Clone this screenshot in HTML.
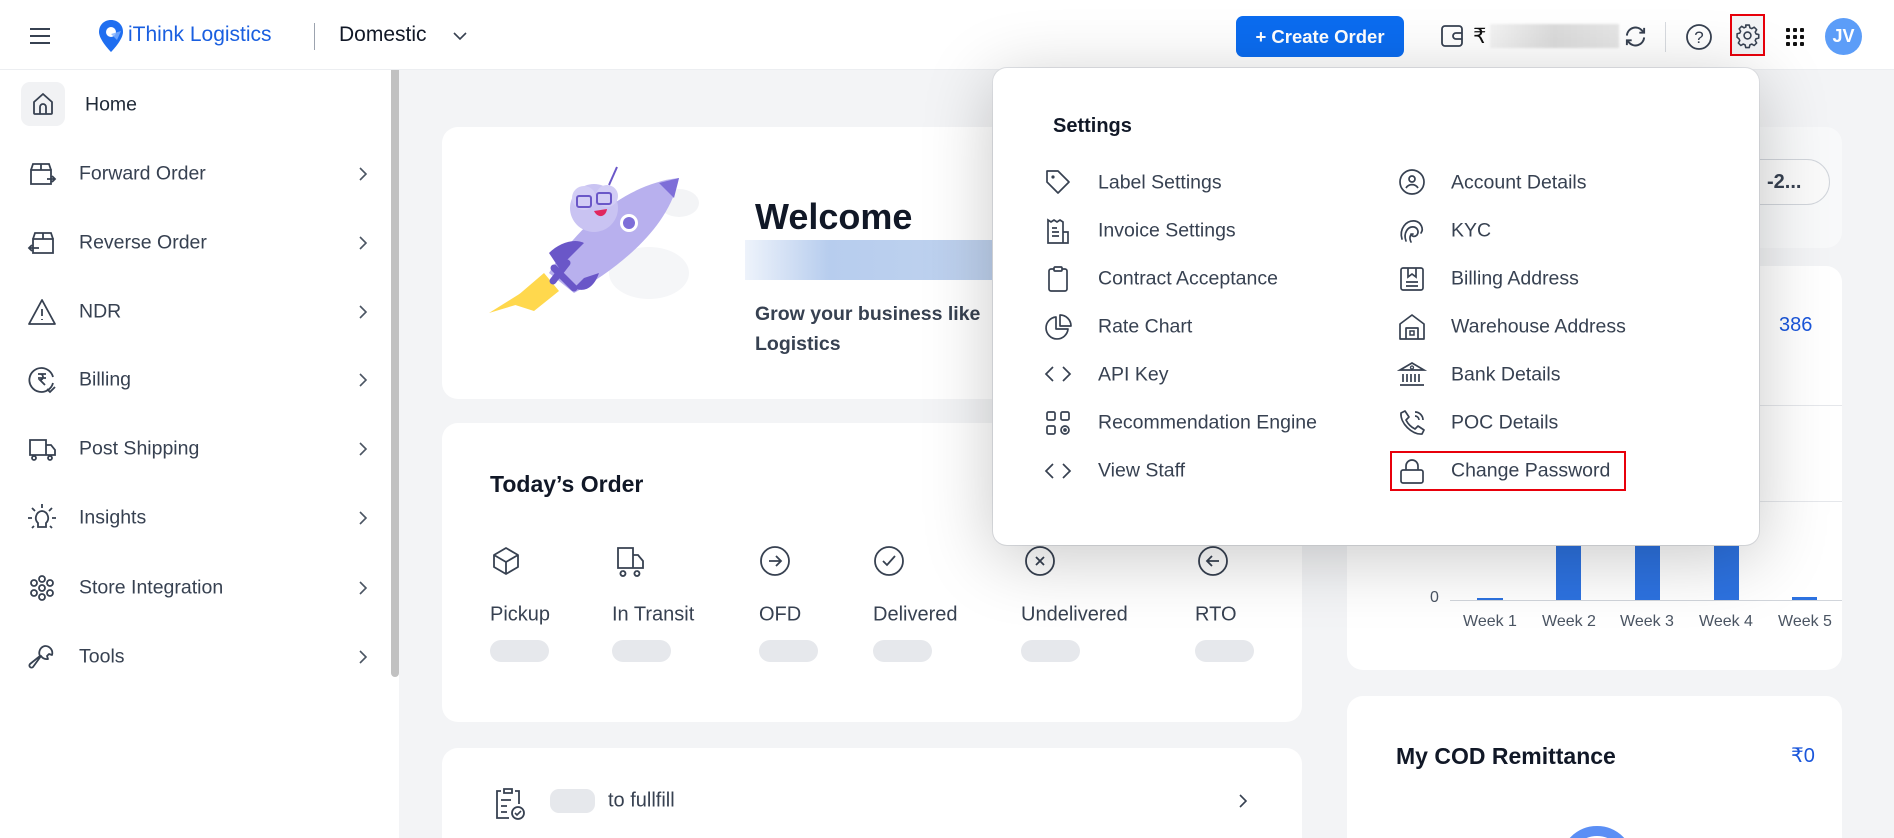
<!DOCTYPE html>
<html style="width:1894px;height:838px;overflow:hidden"><head><meta charset="utf-8"><style>
*{box-sizing:border-box;margin:0;padding:0}
html,body{width:1894px;height:838px;overflow:hidden}
body{background:#f3f4f6;font-family:"Liberation Sans",sans-serif;color:#374151;position:relative}
.abs{position:absolute}
.hdr{left:0;top:0;width:1894px;height:70px;background:#fff;border-bottom:1px solid #eceef1}
.side{left:0;top:70px;width:399px;height:768px;background:#fff}
.sb{left:391px;top:70px;width:8px;height:607px;background:#c1c1c1;border-radius:0 0 4px 4px}
.nav{position:absolute;left:79px;font-size:19.5px;color:#374151;transform:translateY(-50%)}
.ni{position:absolute;left:27px;width:30px;height:30px;transform:translateY(-50%)}
.chev{position:absolute;left:356px;width:14px;height:14px;transform:translateY(-50%)}
.card{background:#fff;border-radius:16px}
.lbl{position:absolute;font-size:20px;color:#374151;transform:translateY(-50%)}
.pill{position:absolute;width:59px;height:22px;border-radius:11px;background:#e6e8ec}
.oi{position:absolute;width:32px;height:32px;transform:translate(0,-50%)}
.pop{left:993px;top:68px;width:766px;height:477px;background:#fff;border-radius:14px;box-shadow:0 12px 70px rgba(0,0,0,.22),0 0 0 1px #e5e7eb}
.it{position:absolute;font-size:19.5px;color:#374151;transform:translateY(-50%)}
.ic{position:absolute;width:28px;height:28px;transform:translateY(-50%)}
svg{overflow:visible}
</style></head><body>

<!-- header -->
<div class="abs hdr"></div>
<svg class="abs" style="left:30px;top:28px" width="20" height="16"><path d="M0 1h20M0 8h20M0 15h20" stroke="#374151" stroke-width="2"/></svg>
<svg class="abs" style="left:99px;top:20px" width="24" height="32" viewBox="0 0 24 32"><path d="M12 0C5 0 0 5 0 12c0 8 12 20 12 20s12-12 12-20C24 5 19 0 12 0z" fill="#1f6ef0"/><circle cx="12" cy="12" r="5" fill="#fff"/><path d="M12 14l6 6 4-9z" fill="#7fb0ff" opacity=".8"/></svg>
<div class="abs" style="left:128px;top:23px;font-size:21px;color:#1a5fe0">iThink Logistics</div>
<div class="abs" style="left:314px;top:23px;width:1px;height:27px;background:#9ca3af"></div>
<div class="abs" style="left:339px;top:23px;font-size:21px;color:#111827">Domestic</div>
<svg class="abs" style="left:453px;top:32px" width="14" height="8"><path d="M1 1l6 6 6-6" fill="none" stroke="#374151" stroke-width="1.6"/></svg>

<div class="abs" style="left:1236px;top:16px;width:168px;height:41px;background:#0b6cf0;border-radius:7px;color:#fff;font-size:18.5px;font-weight:bold;line-height:41px;text-align:center">+ Create Order</div>
<svg class="abs" style="left:1441px;top:25px" width="22" height="22"><rect x="1" y="1" width="20" height="20" rx="3" fill="none" stroke="#374151" stroke-width="1.8"/><path d="M21 8h-6a3 3 0 000 6h6" fill="none" stroke="#374151" stroke-width="1.8"/></svg>
<div class="abs" style="left:1473px;top:24px;font-size:21px;color:#111">₹</div>
<div class="abs" style="left:1490px;top:24px;width:129px;height:24px;background:linear-gradient(90deg,#f3f3f3,#dcdcdc 50%,#e6e6e6);filter:blur(1px)"></div>
<svg class="abs" style="left:1624px;top:25px" width="23" height="23" viewBox="0 0 24 24"><path d="M3 11a9 9 0 0116-5l2 2M21 13a9 9 0 01-16 5l-2-2M21 3v5h-5M3 21v-5h5" fill="none" stroke="#374151" stroke-width="2"/></svg>
<div class="abs" style="left:1665px;top:22px;width:1px;height:30px;background:#d8dbe0"></div>
<svg class="abs" style="left:1686px;top:24px" width="26" height="26"><circle cx="13" cy="13" r="12" fill="none" stroke="#374151" stroke-width="1.8"/><text x="13" y="19" text-anchor="middle" font-size="17" font-family="Liberation Sans" fill="#374151">?</text></svg>
<div class="abs" style="left:1730px;top:14px;width:35px;height:42px;border:2px solid #e8000b;background:#f3f4f6"></div>
<svg class="abs" style="left:1735px;top:23px" width="25" height="25" viewBox="0 0 24 24"><path d="M10.3 2h3.4l.6 2.6 1.8.8 2.3-1.4 2.4 2.4-1.4 2.3.8 1.8 2.6.6v3.4l-2.6.6-.8 1.8 1.4 2.3-2.4 2.4-2.300-1.4-1.8.8-.6 2.6h-3.4l-.6-2.6-1.8-.8-2.3 1.4-2.4-2.4 1.4-2.3-.8-1.8L2 13.7v-3.4l2.6-.6.8-1.8L4 5.6 6.4 3.2l2.3 1.4 1.8-.8z" fill="none" stroke="#374151" stroke-width="1.5" stroke-linejoin="round"/><circle cx="12" cy="12" r="3.3" fill="none" stroke="#374151" stroke-width="1.5"/></svg>
<svg class="abs" style="left:1786px;top:28px" width="18" height="18"><g fill="#111"><rect x="0" y="0" width="4" height="4" rx="1"/><rect x="7" y="0" width="4" height="4" rx="1"/><rect x="14" y="0" width="4" height="4" rx="1"/><rect x="0" y="7" width="4" height="4" rx="1"/><rect x="7" y="7" width="4" height="4" rx="1"/><rect x="14" y="7" width="4" height="4" rx="1"/><rect x="0" y="14" width="4" height="4" rx="1"/><rect x="7" y="14" width="4" height="4" rx="1"/><rect x="14" y="14" width="4" height="4" rx="1"/></g></svg>
<div class="abs" style="left:1825px;top:18px;width:37px;height:37px;border-radius:50%;background:#5c9df8;color:#fff;font-weight:bold;font-size:18px;line-height:37px;text-align:center">JV</div>

<!-- sidebar -->
<div class="abs side"></div>
<div class="abs sb"></div>
<div class="abs" style="left:21px;top:82px;width:44px;height:44px;border-radius:9px;background:#f1f2f4"></div>
<svg class="abs" style="left:31px;top:92px" width="24" height="24" viewBox="0 0 24 24"><path d="M3 10l9-8 9 8v11a1 1 0 01-1 1H4a1 1 0 01-1-1z M9 22v-7a3 3 0 016 0v7" fill="none" stroke="#374151" stroke-width="1.8" stroke-linejoin="round"/></svg>
<div class="nav" style="left:85px;top:105px;color:#1f2937">Home</div>

<svg class="ni" style="top:174px" viewBox="0 0 30 30"><path d="M4 11h20v14H4z M4 11l2-6h16l2 6 M14 5v6 M20 20h8m-3-3l3 3-3 3" fill="none" stroke="#374151" stroke-width="1.8"/></svg>
<div class="nav" style="top:174px">Forward Order</div>
<svg class="ni" style="top:243px" viewBox="0 0 30 30"><path d="M6 11h20v14H6z M6 11l2-6h16l2 6 M16 5v6 M12 20H2m3-3l-3 3 3 3" fill="none" stroke="#374151" stroke-width="1.8"/></svg>
<div class="nav" style="top:243px">Reverse Order</div>
<svg class="ni" style="top:312px" viewBox="0 0 30 30"><path d="M15 3L2 27h26z M15 12v7 M15 22v1" fill="none" stroke="#374151" stroke-width="1.8" stroke-linejoin="round"/></svg>
<div class="nav" style="top:312px">NDR</div>
<svg class="ni" style="top:380px" viewBox="0 0 30 30"><path d="M26 18A12 12 0 1 1 15 3a12 12 0 0 1 11 9 M11 9h8M11 13h8M13 9c4 0 4 6 0 6l5 5 M20 24l3 3 5-5" fill="none" stroke="#374151" stroke-width="1.8"/></svg>
<div class="nav" style="top:380px">Billing</div>
<svg class="ni" style="top:449px" viewBox="0 0 30 30"><path d="M3 6h16v15H3z M19 11h5l4 5v5h-9 M9 24a2 2 0 11-4 0a2 2 0 114 0 M25 24a2 2 0 11-4 0a2 2 0 114 0" fill="none" stroke="#374151" stroke-width="1.8"/></svg>
<div class="nav" style="top:449px">Post Shipping</div>
<svg class="ni" style="top:518px" viewBox="0 0 30 30"><path d="M15 1v4 M1 15h4 M25 15h4 M5 5l3 3 M25 5l-3 3 M5 25l2-2 M25 25l-2-2 M15 8a7 7 0 00-4 12v4h8v-4a7 7 0 00-4-12z" fill="none" stroke="#374151" stroke-width="1.8"/></svg>
<div class="nav" style="top:518px">Insights</div>
<svg class="ni" style="top:588px" viewBox="0 0 30 30"><g fill="none" stroke="#374151" stroke-width="1.8"><circle cx="15" cy="6" r="3"/><circle cx="15" cy="24" r="3"/><circle cx="7" cy="10" r="3"/><circle cx="23" cy="10" r="3"/><circle cx="7" cy="20" r="3"/><circle cx="23" cy="20" r="3"/><circle cx="15" cy="15" r="3"/></g></svg>
<div class="nav" style="top:588px">Store Integration</div>
<svg class="ni" style="top:657px" viewBox="0 0 30 30"><path d="M18 4a7 7 0 017 9l-3-1-2 2 1 3a7 7 0 01-7-3L6 25a2 2 0 01-3-3l10-8a7 7 0 015-10z" fill="none" stroke="#374151" stroke-width="1.8" stroke-linejoin="round"/></svg>
<div class="nav" style="top:657px">Tools</div>
<svg class="chev" style="top:174px" viewBox="0 0 14 14"><path d="M4 1l6 6-6 6" fill="none" stroke="#4b5563" stroke-width="1.6"/></svg>
<svg class="chev" style="top:243px" viewBox="0 0 14 14"><path d="M4 1l6 6-6 6" fill="none" stroke="#4b5563" stroke-width="1.6"/></svg>
<svg class="chev" style="top:312px" viewBox="0 0 14 14"><path d="M4 1l6 6-6 6" fill="none" stroke="#4b5563" stroke-width="1.6"/></svg>
<svg class="chev" style="top:380px" viewBox="0 0 14 14"><path d="M4 1l6 6-6 6" fill="none" stroke="#4b5563" stroke-width="1.6"/></svg>
<svg class="chev" style="top:449px" viewBox="0 0 14 14"><path d="M4 1l6 6-6 6" fill="none" stroke="#4b5563" stroke-width="1.6"/></svg>
<svg class="chev" style="top:518px" viewBox="0 0 14 14"><path d="M4 1l6 6-6 6" fill="none" stroke="#4b5563" stroke-width="1.6"/></svg>
<svg class="chev" style="top:588px" viewBox="0 0 14 14"><path d="M4 1l6 6-6 6" fill="none" stroke="#4b5563" stroke-width="1.6"/></svg>
<svg class="chev" style="top:657px" viewBox="0 0 14 14"><path d="M4 1l6 6-6 6" fill="none" stroke="#4b5563" stroke-width="1.6"/></svg>

<!-- welcome card -->
<div class="abs card" style="left:442px;top:127px;width:860px;height:272px"></div>
<svg class="abs" style="left:489px;top:163px" width="215" height="155" viewBox="0 0 215 155">
<ellipse cx="190" cy="40" rx="20" ry="14" fill="#f3f4f6"/><ellipse cx="160" cy="110" rx="40" ry="26" fill="#f5f6f8"/>
<path d="M0 150l40-25 10 10z" fill="#ffd84d"/><path d="M20 140l35-30 15 18-25 20z" fill="#ffd84d"/>
<path d="M60 110c30-50 80-90 130-95-10 50-60 90-105 115z" fill="#b8b0ee"/>
<path d="M60 90c10-10 25-15 35-10l-25 25z" fill="#6a57c8"/><path d="M85 125c10 5 20 0 25-15l-15 5z" fill="#6a57c8"/>
<path d="M65 105l20 20M78 100l-14 18" stroke="#6a57c8" stroke-width="7" stroke-linecap="round"/>
<path d="M170 20l20-5-5 20z" fill="#7e6ed8"/>
<circle cx="140" cy="60" r="9" fill="#fff"/><circle cx="140" cy="60" r="6" fill="#7e6ed8"/>
<circle cx="105" cy="45" r="24" fill="#c9c3f2"/><circle cx="95" cy="35" r="12" fill="#d2cdf5"/><circle cx="118" cy="33" r="11" fill="#d2cdf5"/>
<rect x="88" y="33" width="14" height="11" rx="2" fill="none" stroke="#6a57c8" stroke-width="2"/><rect x="108" y="30" width="14" height="11" rx="2" fill="none" stroke="#6a57c8" stroke-width="2"/>
<path d="M105 48c4 8 12 6 13-2z" fill="#e0265e"/><path d="M120 22l8-18" stroke="#6a57c8" stroke-width="2"/>
</svg>
<div class="abs" style="left:755px;top:196px;font-size:36px;font-weight:bold;color:#111827">Welcome</div>
<div class="abs" style="left:745px;top:240px;width:560px;height:40px;background:linear-gradient(90deg,#eef3fb,#b7cdee 15%,#c0d3ef 45%,#e8eef8 52%,#b7cdee 60%,#b7cdee)"></div>
<div class="abs" style="left:755px;top:299px;font-size:19.5px;font-weight:bold;color:#374151;line-height:30px">Grow your business like<br>Logistics</div>

<!-- today's order -->
<div class="abs card" style="left:442px;top:423px;width:860px;height:299px"></div>
<div class="abs" style="left:490px;top:471px;font-size:23px;font-weight:bold;color:#111827">Today’s Order</div>
<svg class="oi" style="left:490px;top:561px" viewBox="0 0 32 32"><path d="M16 3l12 7v12l-12 7-12-7V10z M4 10l12 7 12-7 M16 17v12" fill="none" stroke="#374151" stroke-width="1.8" stroke-linejoin="round"/></svg>
<svg class="oi" style="left:614px;top:561px" viewBox="0 0 32 32"><path d="M4 3h15v20H4z M19 10h5l5 6v7H19 M9 26a2.5 2.5 0 11-.1 0M23 26a2.5 2.5 0 11-.1 0" fill="none" stroke="#374151" stroke-width="1.8"/></svg>
<svg class="oi" style="left:759px;top:561px" viewBox="0 0 32 32"><circle cx="16" cy="16" r="14" fill="none" stroke="#374151" stroke-width="1.8"/><path d="M10 16h11M17 11l5 5-5 5" fill="none" stroke="#374151" stroke-width="1.8"/></svg>
<svg class="oi" style="left:873px;top:561px" viewBox="0 0 32 32"><circle cx="16" cy="16" r="14" fill="none" stroke="#374151" stroke-width="1.8"/><path d="M10 16l4 4 8-9" fill="none" stroke="#374151" stroke-width="1.8"/></svg>
<svg class="oi" style="left:1024px;top:561px" viewBox="0 0 32 32"><circle cx="16" cy="16" r="14" fill="none" stroke="#374151" stroke-width="1.8"/><path d="M12 12l8 8M20 12l-8 8" fill="none" stroke="#374151" stroke-width="1.8"/></svg>
<svg class="oi" style="left:1197px;top:561px" viewBox="0 0 32 32"><circle cx="16" cy="16" r="14" fill="none" stroke="#374151" stroke-width="1.8"/><path d="M22 16H11M15 11l-5 5 5 5" fill="none" stroke="#374151" stroke-width="1.8"/></svg>
<div class="lbl" style="left:490px;top:615px">Pickup</div>
<div class="lbl" style="left:612px;top:615px">In Transit</div>
<div class="lbl" style="left:759px;top:615px">OFD</div>
<div class="lbl" style="left:873px;top:615px">Delivered</div>
<div class="lbl" style="left:1021px;top:615px">Undelivered</div>
<div class="lbl" style="left:1195px;top:615px">RTO</div>
<div class="pill" style="left:490px;top:640px"></div>
<div class="pill" style="left:612px;top:640px"></div>
<div class="pill" style="left:759px;top:640px"></div>
<div class="pill" style="left:873px;top:640px"></div>
<div class="pill" style="left:1021px;top:640px"></div>
<div class="pill" style="left:1195px;top:640px"></div>

<!-- fulfill card -->
<div class="abs" style="left:442px;top:748px;width:860px;height:90px;background:#fff;border-radius:16px 16px 0 0"></div>
<svg class="abs" style="left:493px;top:785px" width="34" height="36" viewBox="0 0 34 36"><path d="M11 4h8v4h-8z M8 6H4v27h12 M22 6h4v13 M8 15h10M8 21h6M8 27h6" fill="none" stroke="#374151" stroke-width="1.8"/><circle cx="25" cy="28" r="6" fill="none" stroke="#374151" stroke-width="1.8"/><path d="M22 28l2 2 4-4" fill="none" stroke="#374151" stroke-width="1.6"/></svg>
<div class="abs" style="left:550px;top:789px;width:45px;height:24px;border-radius:9px;background:#e6e8ec"></div>
<div class="lbl" style="left:608px;top:801px">to fullfill</div>
<svg class="abs" style="left:1236px;top:794px" width="14" height="14"><path d="M4 1l6 6-6 6" fill="none" stroke="#374151" stroke-width="1.6"/></svg>

<!-- right column -->
<div class="abs card" style="left:1347px;top:127px;width:495px;height:121px;background:#f8f9fa"></div>
<div class="abs" style="left:1700px;top:159px;width:130px;height:46px;border:1px solid #d1d5db;border-radius:23px;background:#fafafa;font-size:20px;font-weight:bold;color:#374151;line-height:44px;padding-left:66px">-2...</div>
<div class="abs card" style="left:1347px;top:266px;width:495px;height:404px"></div>
<div class="abs" style="left:1779px;top:314px;font-size:20px;color:#1a56db">386</div>
<div class="abs" style="left:1450px;top:405px;width:392px;height:1px;background:#e5e7eb"></div>
<div class="abs" style="left:1450px;top:501px;width:392px;height:1px;background:#e5e7eb"></div>
<div class="abs" style="left:1450px;top:600px;width:392px;height:1px;background:#d1d5db"></div>
<div class="abs" style="left:1430px;top:589px;font-size:16px;color:#4b5563">0</div>
<div class="abs" style="left:1477px;top:598px;width:26px;height:2px;background:#2d72e0"></div>
<div class="abs" style="left:1556px;top:520px;width:25px;height:80px;background:#2d72e0"></div>
<div class="abs" style="left:1635px;top:520px;width:25px;height:80px;background:#2d72e0"></div>
<div class="abs" style="left:1714px;top:520px;width:25px;height:80px;background:#2d72e0"></div>
<div class="abs" style="left:1792px;top:597px;width:25px;height:3px;background:#2d72e0"></div>
<div class="abs" style="left:1462px;top:613px;width:380px;font-size:16px;color:#4b5563">
<span class="abs" style="left:1px">Week 1</span><span class="abs" style="left:80px">Week 2</span><span class="abs" style="left:158px">Week 3</span><span class="abs" style="left:237px">Week 4</span><span class="abs" style="left:316px">Week 5</span></div>
<div class="abs" style="left:1347px;top:696px;width:495px;height:142px;background:#fff;border-radius:16px 16px 0 0"></div>
<div class="abs" style="left:1396px;top:743px;font-size:23px;font-weight:bold;color:#111827">My COD Remittance</div>
<div class="abs" style="left:1791px;top:743px;font-size:20px;color:#1a56db">₹0</div>
<div class="abs" style="left:1560px;top:826px;width:74px;height:12px;overflow:hidden"><div style="width:74px;height:74px;border-radius:50%;border:10px solid #5b8ff5"></div></div>

<!-- settings popup -->
<div class="abs pop"></div>
<div class="abs" style="left:1053px;top:115px;font-size:20px;font-weight:bold;color:#111827">Settings</div>

<svg class="ic" style="left:1044px;top:182px" viewBox="0 0 28 28"><path d="M3 3h11l11 11-11 11L3 14z" fill="none" stroke="#374151" stroke-width="1.7" stroke-linejoin="round"/><circle cx="9" cy="9" r="1.6" fill="#374151"/></svg>
<svg class="ic" style="left:1044px;top:231px" viewBox="0 0 28 28"><path d="M4 3l3 2 3-2 3 2 3-2 3 2v21H4z M8 11h5M8 15h7M8 19h7 M19 15h5v11h-5" fill="none" stroke="#374151" stroke-width="1.7"/></svg>
<svg class="ic" style="left:1044px;top:279px" viewBox="0 0 28 28"><rect x="5" y="4" width="18" height="22" rx="2" fill="none" stroke="#374151" stroke-width="1.7"/><rect x="10" y="2" width="8" height="4" rx="1" fill="#fff" stroke="#374151" stroke-width="1.7"/></svg>
<svg class="ic" style="left:1044px;top:327px" viewBox="0 0 28 28"><path d="M12 4a11 11 0 1012 12H12z M16 2v11h11A11 11 0 0016 2z" fill="none" stroke="#374151" stroke-width="1.7" stroke-linejoin="round"/></svg>
<svg class="ic" style="left:1044px;top:374px" viewBox="0 0 28 28"><path d="M9 7l-7 7 7 7M19 7l7 7-7 7" fill="none" stroke="#374151" stroke-width="1.7"/></svg>
<svg class="ic" style="left:1044px;top:423px" viewBox="0 0 28 28"><g fill="none" stroke="#374151" stroke-width="1.7"><rect x="3" y="3" width="8" height="8" rx="1.5"/><rect x="17" y="3" width="8" height="8" rx="1.5"/><rect x="3" y="17" width="8" height="8" rx="1.5"/><circle cx="21" cy="21" r="4"/><circle cx="21" cy="21" r="1"/></g></svg>
<svg class="ic" style="left:1044px;top:471px" viewBox="0 0 28 28"><path d="M9 7l-7 7 7 7M19 7l7 7-7 7" fill="none" stroke="#374151" stroke-width="1.7"/></svg>
<div class="it" style="left:1098px;top:183px">Label Settings</div>
<div class="it" style="left:1098px;top:231px">Invoice Settings</div>
<div class="it" style="left:1098px;top:279px">Contract Acceptance</div>
<div class="it" style="left:1098px;top:327px">Rate Chart</div>
<div class="it" style="left:1098px;top:375px">API Key</div>
<div class="it" style="left:1098px;top:423px">Recommendation Engine</div>
<div class="it" style="left:1098px;top:471px">View Staff</div>

<svg class="ic" style="left:1398px;top:182px" viewBox="0 0 28 28"><circle cx="14" cy="14" r="12" fill="none" stroke="#374151" stroke-width="1.7"/><circle cx="14" cy="11" r="3" fill="none" stroke="#374151" stroke-width="1.7"/><path d="M8 20a7 7 0 0112 0" fill="none" stroke="#374151" stroke-width="1.7"/></svg>
<svg class="ic" style="left:1398px;top:231px" viewBox="0 0 28 28"><path d="M4 22C1 12 8 3 17 4c6 1 9 8 6 12 M8 24c-3-8 2-15 8-14 4 1 5 5 3 8-2 2-5 2-6-1 M13 25c-2-4-1-8 2-8" fill="none" stroke="#374151" stroke-width="1.7" stroke-linecap="round"/></svg>
<svg class="ic" style="left:1398px;top:279px" viewBox="0 0 28 28"><rect x="3" y="3" width="22" height="22" rx="2" fill="none" stroke="#374151" stroke-width="1.7"/><path d="M10 3v9l4-3 4 3V3 M8 17h12M8 21h12" fill="none" stroke="#374151" stroke-width="1.7"/></svg>
<svg class="ic" style="left:1398px;top:327px" viewBox="0 0 28 28"><path d="M2 26V11L14 2l12 9v15z M8 26V15h12v11 M2 26h24" fill="none" stroke="#374151" stroke-width="1.7" stroke-linejoin="round"/><rect x="12" y="18" width="4" height="4" fill="none" stroke="#374151" stroke-width="1.5"/></svg>
<svg class="ic" style="left:1398px;top:374px" viewBox="0 0 28 28"><path d="M2 10L14 3l12 7z M2 10h24 M5 14v8M9 14v8M13 14v8M17 14v8M21 14v8 M2 25h24" fill="none" stroke="#374151" stroke-width="1.7"/><circle cx="14" cy="7.5" r="1.5" fill="none" stroke="#374151" stroke-width="1.3"/></svg>
<svg class="ic" style="left:1398px;top:423px" viewBox="0 0 28 28"><path d="M7 2l4 6-3 3c2 4 5 7 9 9l3-3 6 4-2 4c-10 1-22-11-21-21z M17 3a8 8 0 018 8 M17 7a4 4 0 014 4" fill="none" stroke="#374151" stroke-width="1.7" stroke-linejoin="round"/></svg>
<svg class="ic" style="left:1398px;top:471px" viewBox="0 0 28 28"><rect x="3" y="13" width="22" height="13" rx="2" fill="none" stroke="#374151" stroke-width="1.7"/><path d="M8 13V9a6 6 0 0112 0v4" fill="none" stroke="#374151" stroke-width="1.7"/></svg>
<div class="it" style="left:1451px;top:183px">Account Details</div>
<div class="it" style="left:1451px;top:231px">KYC</div>
<div class="it" style="left:1451px;top:279px">Billing Address</div>
<div class="it" style="left:1451px;top:327px">Warehouse Address</div>
<div class="it" style="left:1451px;top:375px">Bank Details</div>
<div class="it" style="left:1451px;top:423px">POC Details</div>
<div class="it" style="left:1451px;top:471px">Change Password</div>
<div class="abs" style="left:1390px;top:451px;width:236px;height:40px;border:2.5px solid #e8000b"></div>

</body></html>
